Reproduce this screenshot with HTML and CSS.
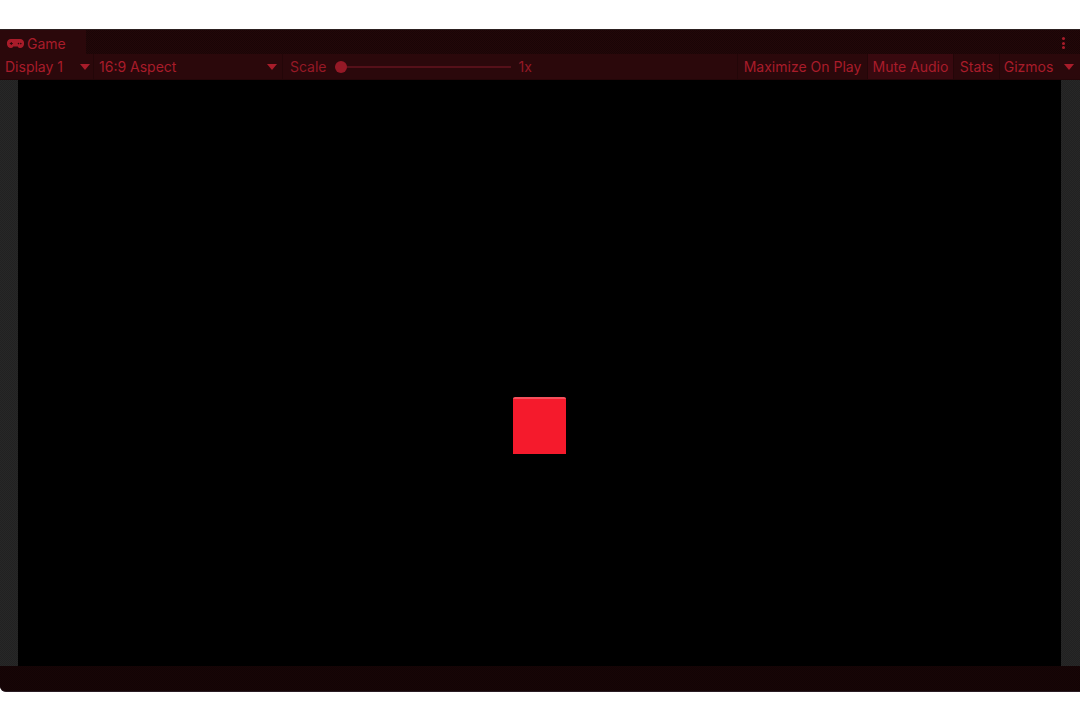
FILE: index.html
```html
<!DOCTYPE html>
<html lang="en">

<head>
    <meta charset="UTF-8">
    <title>Game</title>
    <link rel="stylesheet" href="styles.css">
</head>

<body>
    <div class="window">
        <div class="tabs">
            <div class="tab">
                <svg class="pad" width="17" height="9" viewBox="0 0 17 9">
                    <path fill="#a81c2a" fill-rule="evenodd" d="M4 0H13A4 4 0 0 1 17 4.500A4 4 0 0 1 13 9Q11.500 9 10.700 7.500H6.300Q5.500 9 4 9A4 4 0 0 1 0 4.500A4 4 0 0 1 4 0ZM3.800 3V4H2.800V5H3.800V6H4.800V5H5.800V4H4.800V3ZM11.500 3.800A0.800 0.800 0 1 0 11.500 5.400A0.800 0.800 0 1 0 11.500 3.800ZM13.800 3.800A0.800 0.800 0 1 0 13.800 5.400A0.800 0.800 0 1 0 13.800 3.800Z" />
                </svg>
                <span>Game</span>
            </div>
            <div class="more">
                <i></i><i></i><i></i>
            </div>
        </div>

        <div class="toolbar">
            <div class="drop display">Display 1<b class="arrow"></b></div>
            <div class="drop aspect">16:9 Aspect<b class="arrow"></b></div>
            <div class="scale">
                <span>Scale</span>
                <div class="slider"><div class="thumb"></div></div>
                <span>1x</span>
            </div>
            <div class="btn maximize">Maximize On Play</div>
            <div class="btn mute">Mute Audio</div>
            <div class="btn stats">Stats</div>
            <div class="btn gizmos">Gizmos</div>
            <div class="gizmo-drop"><b class="arrow"></b></div>
        </div>

        <div class="view">
            <div class="side"></div>
            <div class="screen">
                <div class="cube"></div>
            </div>
            <div class="side"></div>
        </div>

        <div class="status"></div>
    </div>
</body>

</html>
```

FILE: styles.css
```css
* {
    margin: 0;
    padding: 0;
    box-sizing: border-box;
}

body {
    background-color: #FFF;
    font-family: Inter, "Liberation Sans", sans-serif;
    font-size: 14px;
    color: #a81c2a;
}

.window {
    display: flex;
    flex-direction: column;
    height: 663px;
    margin-top: 29px;
    background-color: #1c0507;
    border-top: 1px solid #2c2020;
    border-bottom: 1px solid #2a1c24;
    border-radius: 0 0 0 6px;
    overflow: hidden;
}

.tabs {
    display: flex;
    justify-content: space-between;
    align-items: center;
    height: 24px;
    background-image: repeating-conic-gradient(#230709 0 25%, #190506 0 50%);
    background-size: 2px 2px;
}

.tab {
    display: flex;
    align-items: center;
    gap: 3px;
    width: 86px;
    height: 100%;
    padding: 3px 0 0 7px;
    background-color: #2b080b;
}

.more {
    display: flex;
    flex-direction: column;
    gap: 1.500px;
    margin-right: 15px;
    padding-top: 2px;
}

.more i {
    display: block;
    width: 3px;
    height: 3px;
    background-color: #a81c2a;
    border-radius: 50%;
}

.toolbar {
    display: flex;
    align-items: stretch;
    height: 26px;
    background-color: #2b080b;
    border-bottom: 1px solid #230608;
    line-height: 25px;
}

.drop {
    display: flex;
    justify-content: space-between;
    align-items: center;
    padding: 0 3px 0 5px;
    border-right: 1px solid #230608;
}

.display {
    width: 94px;
}

.aspect {
    width: 189px;
    padding-right: 5px;
}

.arrow {
    display: block;
    width: 0;
    height: 0;
    border-left: 5px solid transparent;
    border-right: 5px solid transparent;
    border-top: 6px solid #a81c2a;
}

.scale {
    display: flex;
    align-items: center;
    flex: 1;
    padding-left: 7px;
    color: #951926;
}

.slider {
    position: relative;
    width: 176px;
    height: 2px;
    margin: 0 8px;
    background-color: #551019;
}

.thumb {
    position: absolute;
    top: -5px;
    left: 0;
    width: 12px;
    height: 12px;
    background-color: #951926;
    border-radius: 50%;
}

.btn {
    border-left: 1px solid #230608;
    text-align: center;
}

.maximize {
    width: 130px;
}

.mute {
    width: 86px;
    background-color: #38090f;
}

.stats {
    width: 46px;
}

.gizmos {
    width: 58px;
}

.gizmo-drop {
    display: flex;
    align-items: center;
    justify-content: center;
    width: 23px;
}

.view {
    display: flex;
    flex: 1;
    background-color: #000;
}

.side {
    width: 18px;
    background-image: repeating-conic-gradient(#272727 0 25%, #212121 0 50%);
    background-size: 2px 2px;
}

.side:last-child {
    width: 19px;
}

.screen {
    display: flex;
    flex: 1;
    justify-content: center;
    padding-top: 317px;
    background-color: #000;
}

.cube {
    width: 53px;
    height: 57px;
    background-color: #f51a2c;
    border-top: 2px solid #f5505c;
    border-radius: 2px 2px 0 0;
}

.status {
    height: 25px;
    background-image: repeating-conic-gradient(#180506 0 25%, #120405 0 50%);
    background-size: 2px 2px;
}
```
